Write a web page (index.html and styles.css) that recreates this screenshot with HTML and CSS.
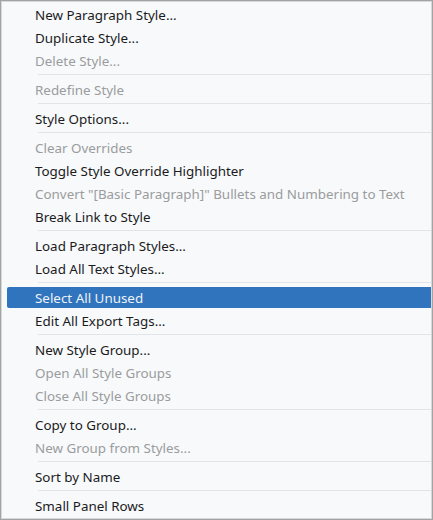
FILE: index.html
```html
<!DOCTYPE html>
<html>
<head>
<meta charset="utf-8">
<link rel="stylesheet" href="styles.css">
</head>
<body>
<div class="menu">
  <div class="item">New Paragraph Style...</div>
  <div class="item">Duplicate Style...</div>
  <div class="item disabled">Delete Style...</div>
  <div class="sep"></div>
  <div class="item disabled">Redefine Style</div>
  <div class="sep"></div>
  <div class="item">Style Options...</div>
  <div class="sep"></div>
  <div class="item disabled">Clear Overrides</div>
  <div class="item">Toggle Style Override Highlighter</div>
  <div class="item disabled">Convert "[Basic Paragraph]" Bullets and Numbering to Text</div>
  <div class="item">Break Link to Style</div>
  <div class="sep"></div>
  <div class="item">Load Paragraph Styles...</div>
  <div class="item">Load All Text Styles...</div>
  <div class="sep"></div>
  <div class="item active">Select All Unused</div>
  <div class="item">Edit All Export Tags...</div>
  <div class="sep"></div>
  <div class="item">New Style Group...</div>
  <div class="item disabled">Open All Style Groups</div>
  <div class="item disabled">Close All Style Groups</div>
  <div class="sep"></div>
  <div class="item">Copy to Group...</div>
  <div class="item disabled">New Group from Styles...</div>
  <div class="sep"></div>
  <div class="item">Sort by Name</div>
  <div class="sep"></div>
  <div class="item">Small Panel Rows</div>
</div>
</body>
</html>
```
FILE: styles.css
```css
html, body {
  margin: 0;
  padding: 0;
  background: #f7f9fb;
}
.menu {
  box-sizing: border-box;
  width: 433px;
  height: 520px;
  display: flex;
  flex-direction: column;
  border: 1px solid #a3a3a3;
  box-shadow: inset 0 0 0 1px #d6d8da;
  background: #f7f9fb;
  padding: 2px 1px 0 0;
  font-family: "Noto Sans", "Open Sans", sans-serif;
  font-size: 13.4px;
  color: #1b1b1b;
  overflow: hidden;
}
.item {
  flex: none;
  height: 21px;
  margin: 1px 0 1px 6px;
  padding-left: 28px;
  display: flex;
  align-items: center;
  white-space: nowrap;
  border-radius: 2px 0 0 2px;
}
.item.disabled {
  color: #9b9c9d;
}
.item.active {
  background: #2f74bd;
  color: #eef2f7;
}
.sep {
  flex: none;
  height: 1px;
  margin: 2px 0 3px 37px;
  background: #e2e5e8;
}
```
